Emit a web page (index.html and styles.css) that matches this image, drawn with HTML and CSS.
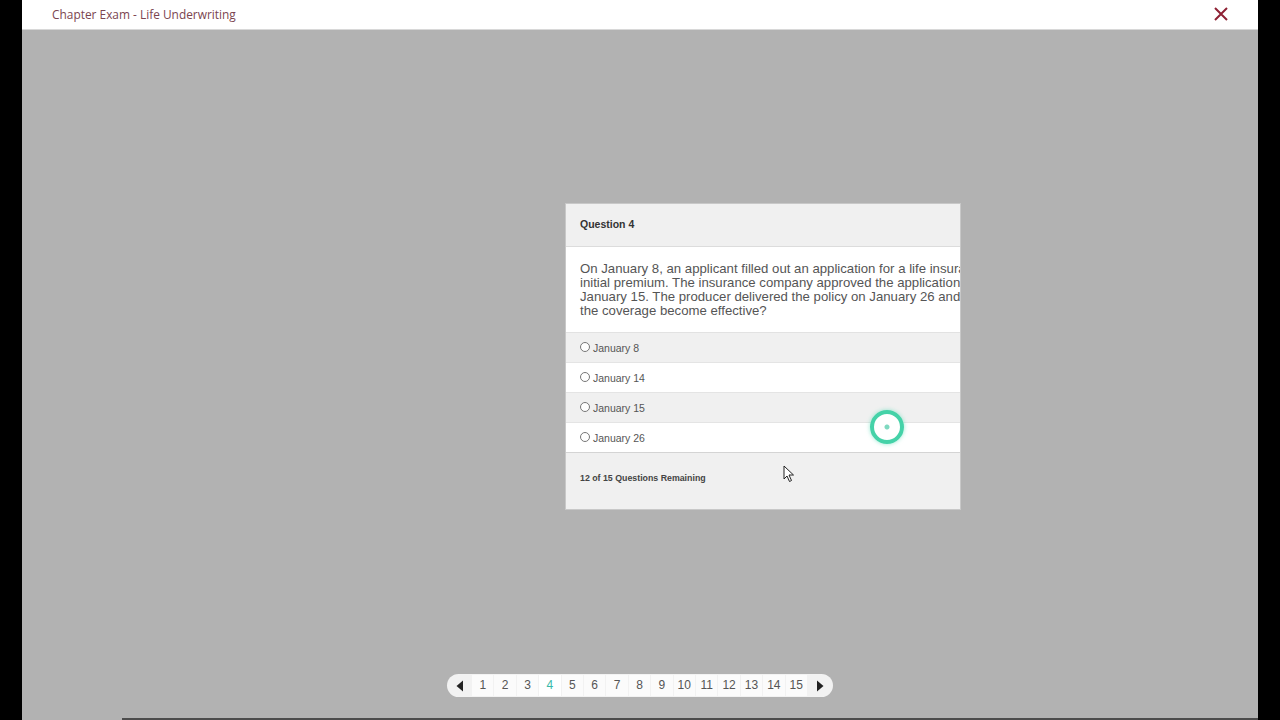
FILE: index.html
```html
<!DOCTYPE html>
<html lang="en">
<head>
    <meta charset="UTF-8" />
    <meta name="viewport" content="width=device-width, initial-scale=1.0" />
    <title>Chapter Exam - Life Underwriting</title>
    <link rel="stylesheet" href="styles.css">
</head>
<body>
    <div class="frame">
        <div class="topbar">
            <span class="exam-title">Chapter Exam - Life Underwriting</span>
            <svg class="close-icon" viewBox="0 0 16 16" width="16" height="16">
                <path d="M2 2L14 14M14 2L2 14" />
            </svg>
        </div>

        <div class="stage">
            <div class="card">
                <div class="card-head">Question 4</div>
                <div class="question">
                    On January 8, an applicant filled out an application for a life insurance policy and paid the<br>
                    initial premium. The insurance company approved the application on January 14 and issued<br>
                    January 15. The producer delivered the policy on January 26 and collected the receipt. When did<br>
                    the coverage become effective?
                </div>
                <ul class="answers">
                    <li class="answer"><span class="radio"></span>January 8</li>
                    <li class="answer"><span class="radio"></span>January 14</li>
                    <li class="answer"><span class="radio"></span>January 15</li>
                    <li class="answer"><span class="radio"></span>January 26</li>
                </ul>
                <div class="card-foot">12 of 15 Questions Remaining</div>
            </div>

            <!-- click ripple + pointer from the recording -->
            <div class="ripple"></div>
            <svg class="pointer" viewBox="0 0 12 18" width="12" height="18">
                <path d="M1 1L1 14L4 11L6.5 16.5L8.5 15.5L6 10L10.5 10Z" />
            </svg>
        </div>

        <div class="pager">
            <div class="pages">
                <svg class="arrow prev" viewBox="0 0 8 12" width="8" height="12"><path d="M7 0.5L7 11.5L0.5 6Z" /></svg>
                <span class="page">1</span>
                <span class="page">2</span>
                <span class="page">3</span>
                <span class="page current">4</span>
                <span class="page">5</span>
                <span class="page">6</span>
                <span class="page">7</span>
                <span class="page">8</span>
                <span class="page">9</span>
                <span class="page">10</span>
                <span class="page">11</span>
                <span class="page">12</span>
                <span class="page">13</span>
                <span class="page">14</span>
                <span class="page">15</span>
                <svg class="arrow next" viewBox="0 0 8 12" width="8" height="12"><path d="M1 0.5L1 11.5L7.5 6Z" /></svg>
            </div>
        </div>
        <div class="progress-line"></div>
    </div>
</body>
</html>
```

FILE: styles.css
```css
body {
    margin: 0;
    background: #000;
    font-family: Arial, 'Liberation Sans', sans-serif;
}

.frame {
    margin: 0 22px;
    height: 720px;
    background: #b2b2b2;
    display: flex;
    flex-direction: column;
    position: relative;
}

/* Top bar */
.topbar {
    height: 29px;
    background: #fff;
    border-bottom: 1px solid #d8d8d8;
    display: flex;
    align-items: center;
    justify-content: space-between;
    padding: 0 29px 0 30px;
}

.exam-title {
    font-family: 'Open Sans', sans-serif;
    font-size: 11.9px;
    color: #7b4550;
    margin-top: -1px;
}

.close-icon {
    stroke: #8e2134;
    stroke-width: 2;
    fill: none;
    margin-top: -1px;
}

/* Question card */
.stage {
    flex: 1;
    padding: 173px 0 0 543px;
}

.card {
    width: 394px;
    border: 1px solid #c8c8c8;
    background: #f0f0f0;
    overflow: hidden;
}

.card-head {
    height: 42px;
    line-height: 41px;
    padding-left: 14px;
    font-size: 10.5px;
    font-weight: bold;
    color: #333;
    border-bottom: 1px solid #dcdcdc;
}

.question {
    background: #fff;
    padding: 15px 0 14px 14px;
    width: 700px;
    font-size: 13.2px;
    line-height: 14px;
    color: #555;
    white-space: nowrap;
    border-bottom: 1px solid #e2e2e2;
}

.answers {
    list-style: none;
    margin: 0;
    padding: 0;
}

.answer {
    height: 29px;
    display: flex;
    align-items: center;
    padding-left: 14px;
    font-size: 10.5px;
    color: #555;
    border-bottom: 1px solid #e4e4e4;
}

.answer:nth-child(odd) {
    background: #f0f0f0;
}

.answer:nth-child(even) {
    background: #fff;
}

.answer:last-child {
    border-bottom-color: #d4d4d4;
}

.radio {
    width: 8px;
    height: 8px;
    border: 1px solid #777;
    border-radius: 50%;
    background: #fff;
    margin-right: 3px;
    margin-top: -2px;
}

.card-foot {
    height: 56px;
    line-height: 50px;
    padding-left: 14px;
    font-size: 8.8px;
    font-weight: bold;
    color: #444;
}

/* ripple + cursor overlay */
.ripple {
    position: absolute;
    left: 848px;
    top: 410px;
    width: 26px;
    height: 26px;
    border: 4px solid #45d2a8;
    border-radius: 50%;
    box-shadow: 0 0 4px rgba(80, 220, 180, 0.6);
    background: radial-gradient(circle, #7fd9c0 0 2px, #fff 3px);
    box-sizing: content-box;
}

.pointer {
    position: absolute;
    left: 761px;
    top: 465px;
    fill: #fff;
    stroke: #222;
    stroke-width: 1;
}

/* pagination */
.pager {
    display: flex;
    justify-content: center;
    padding-bottom: 21px;
}

.pages {
    display: flex;
    align-items: center;
    height: 23px;
    padding: 0 6px;
    background: #f2f2f2;
    border-radius: 12px;
    gap: 1px;
}

.page {
    width: 21.4px;
    height: 21px;
    line-height: 21px;
    text-align: center;
    font-size: 12px;
    color: #555;
    background: #fbfbfb;
}

.page.current {
    background: #fff;
    color: #39b9a8;
}

.arrow {
    fill: #222;
}

.arrow.prev {
    margin: 0 7px 0 3px;
}

.arrow.next {
    margin: 0 3px 0 8px;
}

.progress-line {
    height: 2px;
    margin-left: 100px;
    background: #4c4c4c;
}
```
